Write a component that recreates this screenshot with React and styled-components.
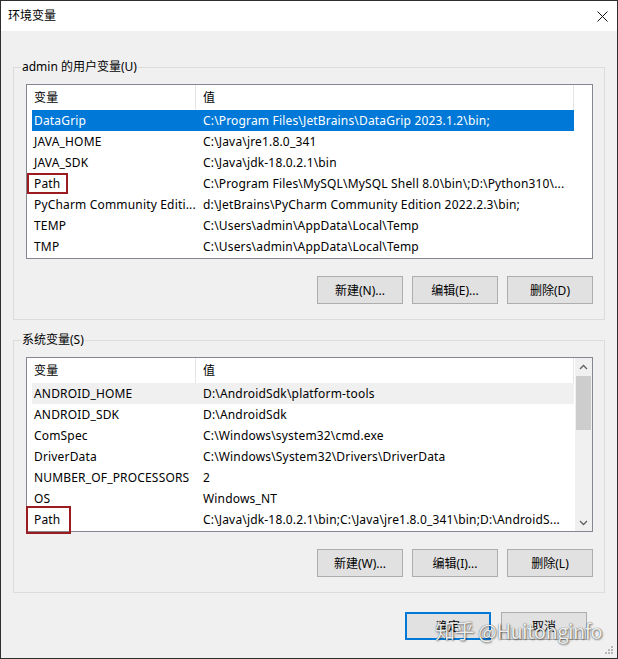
import React from "react";
import styled, { createGlobalStyle } from "styled-components";

const Global = createGlobalStyle`
  html, body { margin: 0; padding: 0; background: #f0f0f0; }
  * { box-sizing: border-box; }
`;

const FONT = `"Noto Sans", "Noto Sans CJK SC", sans-serif`;

const Window = styled.div`
  position: relative;
  width: 618px;
  height: 659px;
  border: 1px solid #2e2e2e;
  background: #f0f0f0;
  display: flex;
  flex-direction: column;
  font-family: ${FONT};
  font-size: 12px;
  color: #000;
  overflow: hidden;
`;

const TitleBar = styled.div`
  height: 30px;
  flex: none;
  background: #fff;
  display: flex;
  align-items: center;
  justify-content: space-between;
  padding: 0 9px 0 7px;
`;

const Title = styled.span`
  font-size: 12px;
  line-height: 16px;
`;

const Body = styled.div`
  display: flex;
  flex-direction: column;
  padding: 28px 12px 0 12px;
`;

const Group = styled.fieldset`
  margin: ${(p) => (p.$first ? "0" : "12px 0 0 0")};
  border: 1px solid #dcdcdc;
  padding: 9px 11px 15px 12px;
  min-width: 0;
  display: flex;
  flex-direction: column;
`;

const Legend = styled.legend`
  margin-left: -5px;
  padding: 0 1px;
  line-height: 16px;
  font-size: 12px;
`;

const ListBox = styled.div`
  height: 175px;
  border: 1px solid #828790;
  background: #fff;
  display: flex;
  letter-spacing: 0.17px;
`;

const Table = styled.div`
  flex: 1;
  display: flex;
  flex-direction: column;
`;

const HeaderRow = styled.div`
  height: 25px;
  display: flex;
  flex: none;
`;

const HeaderCell = styled.div`
  width: ${(p) => p.$w}px;
  border-right: 1px solid #e5e5e5;
  padding: 1px 0 0 7px;
  display: flex;
  align-items: center;
  line-height: 16px;
`;

const Row = styled.div`
  height: 21px;
  margin-left: 5px;
  width: 542px;
  padding-top: 1px;
  display: flex;
  flex: none;
  align-items: center;
  background: ${(p) =>
    p.$state === "selected" ? "#0078d7" : p.$state === "soft" ? "#f0f0f0" : "transparent"};
  color: ${(p) => (p.$state === "selected" ? "#fff" : "#000")};
`;

const NameCell = styled.div`
  width: 163px;
  padding-left: 2px;
  white-space: nowrap;
  overflow: visible;
  line-height: 16px;
`;

const ValueCell = styled.div`
  width: 379px;
  padding-left: 8px;
  white-space: nowrap;
  overflow: hidden;
  line-height: 16px;
`;

const Marked = styled.span`
  position: relative;
  &::after {
    content: "";
    position: absolute;
    left: ${(p) => -p.$l}px;
    right: ${(p) => -p.$r}px;
    top: ${(p) => -p.$t}px;
    bottom: ${(p) => -p.$b}px;
    border: 2px solid #9b1b20;
  }
`;

const ScrollBar = styled.div`
  width: 17px;
  flex: none;
  background: #f0f0f0;
  display: flex;
  flex-direction: column;
`;

const Arrow = styled.div`
  height: 17px;
  display: flex;
  align-items: center;
  justify-content: center;
  flex: none;
`;

const Track = styled.div`
  flex: 1;
  padding-top: 1px;
`;

const Thumb = styled.div`
  height: 54px;
  margin: 0 1px;
  background: #cdcdcd;
`;

const ButtonRow = styled.div`
  display: flex;
  justify-content: flex-end;
  gap: ${(p) => p.$gap || 9}px;
  margin-top: ${(p) => p.$mt || 17}px;
  padding-right: ${(p) => p.$pr || 0}px;
`;

const Button = styled.button`
  width: 86px;
  height: 28px;
  font-family: ${FONT};
  font-size: 12px;
  color: #000;
  background: #e1e1e1;
  border: ${(p) => (p.$default ? "2px solid #0078d7" : "1px solid #adadad")};
  padding: 0;
  margin: 0;
`;

const Watermark = styled.div`
  position: absolute;
  left: 434px;
  top: 617px;
  font-family: "Noto Sans CJK SC", "Noto Sans", sans-serif;
  font-size: 20px;
  line-height: 26px;
  color: rgba(255, 255, 255, 0.92);
  text-shadow: 0 0 1px rgba(0, 0, 0, 0.7), 1px 1px 2px rgba(0, 0, 0, 0.45);
  white-space: nowrap;
  pointer-events: none;
  letter-spacing: -0.5px;
`;

const Grip = styled.svg`
  position: absolute;
  right: 3px;
  bottom: 3px;
`;

const Chevron = ({ up }) => (
  <svg width="9" height="6" viewBox="0 0 9 6">
    <path
      d={up ? "M1 5 L4.5 1.5 L8 5" : "M1 1 L4.5 4.5 L8 1"}
      fill="none"
      stroke="#606060"
      strokeWidth="1.3"
    />
  </svg>
);

const userVars = [
  ["DataGrip", "C:\\Program Files\\JetBrains\\DataGrip 2023.1.2\\bin;", "selected"],
  ["JAVA_HOME", "C:\\Java\\jre1.8.0_341"],
  ["JAVA_SDK", "C:\\Java\\jdk-18.0.2.1\\bin"],
  ["Path", "C:\\Program Files\\MySQL\\MySQL Shell 8.0\\bin\\;D:\\Python310\\...", null, { l: 7, r: 8, t: 2, b: 2 }],
  ["PyCharm Community Editi...", "d:\\JetBrains\\PyCharm Community Edition 2022.2.3\\bin;"],
  ["TEMP", "C:\\Users\\admin\\AppData\\Local\\Temp"],
  ["TMP", "C:\\Users\\admin\\AppData\\Local\\Temp"],
];

const sysVars = [
  ["ANDROID_HOME", "D:\\AndroidSdk\\platform-tools", "soft"],
  ["ANDROID_SDK", "D:\\AndroidSdk"],
  ["ComSpec", "C:\\Windows\\system32\\cmd.exe"],
  ["DriverData", "C:\\Windows\\System32\\Drivers\\DriverData"],
  ["NUMBER_OF_PROCESSORS", "2"],
  ["OS", "Windows_NT"],
  ["Path", "C:\\Java\\jdk-18.0.2.1\\bin;C:\\Java\\jre1.8.0_341\\bin;D:\\AndroidS...", null, { l: 8, r: 11, t: 5, b: 6 }],
];

const VarList = ({ rows, scroll }) => (
  <ListBox>
    <Table>
      <HeaderRow>
        <HeaderCell $w={169}>变量</HeaderCell>
        <HeaderCell $w={378}>值</HeaderCell>
      </HeaderRow>
      {rows.map(([name, value, state, mark]) => (
        <Row key={name} $state={state}>
          <NameCell>
            {mark ? (
              <Marked $l={mark.l} $r={mark.r} $t={mark.t} $b={mark.b}>
                {name}
              </Marked>
            ) : (
              name
            )}
          </NameCell>
          <ValueCell>{value}</ValueCell>
        </Row>
      ))}
    </Table>
    {scroll && (
      <ScrollBar>
        <Arrow>
          <Chevron up />
        </Arrow>
        <Track>
          <Thumb />
        </Track>
        <Arrow>
          <Chevron />
        </Arrow>
      </ScrollBar>
    )}
  </ListBox>
);

export default function App() {
  return (
    <>
      <Global />
      <Window>
        <TitleBar>
          <Title>环境变量</Title>
          <svg width="11" height="11" viewBox="0 0 11 11">
            <path d="M0.5 0.5 L10.5 10.5 M10.5 0.5 L0.5 10.5" stroke="#111" strokeWidth="1" />
          </svg>
        </TitleBar>
        <Body>
          <Group $first>
            <Legend>admin 的用户变量(U)</Legend>
            <VarList rows={userVars} />
            <ButtonRow>
              <Button>新建(N)...</Button>
              <Button>编辑(E)...</Button>
              <Button>删除(D)</Button>
            </ButtonRow>
          </Group>
          <Group>
            <Legend>系统变量(S)</Legend>
            <VarList rows={sysVars} scroll />
            <ButtonRow>
              <Button>新建(W)...</Button>
              <Button>编辑(I)...</Button>
              <Button>删除(L)</Button>
            </ButtonRow>
          </Group>
          <ButtonRow $mt={19} $gap={10} $pr={18}>
            <Button $default>确定</Button>
            <Button>取消</Button>
          </ButtonRow>
        </Body>
        <Watermark>知乎 @Huitonginfo</Watermark>
        <Grip width="10" height="10" viewBox="0 0 10 10">
          {[
            [8, 2], [8, 5], [5, 5], [8, 8], [5, 8], [2, 8],
          ].map(([x, y]) => (
            <rect key={`${x}-${y}`} x={x - 1} y={y - 1} width="2" height="2" fill="#b8b8b8" />
          ))}
        </Grip>
      </Window>
    </>
  );
}
